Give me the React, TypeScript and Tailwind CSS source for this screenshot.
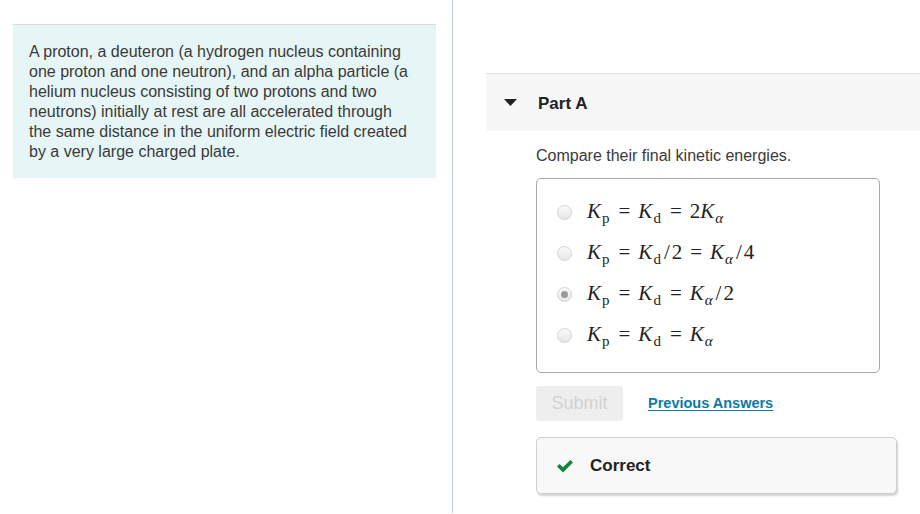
import React from "react";

type Opt = { parts: React.ReactNode; selected?: boolean };

function K({ sub }: { sub: React.ReactNode }) {
  return (
    <span className="whitespace-nowrap">
      <i>K</i>
      <span className="relative top-[5px] ml-[1px] mr-[1px] text-[15px] not-italic leading-none">{sub}</span>
    </span>
  );
}

const Eq = () => <span className="mx-[8px]">=</span>;
const Slash = () => <span className="mx-[2px]">/</span>;
const alpha = <i>α</i>;

const options: Opt[] = [
  {
    parts: (
      <>
        <K sub="p" />
        <Eq />
        <K sub="d" />
        <Eq />
        2<K sub={alpha} />
      </>
    ),
  },
  {
    parts: (
      <>
        <K sub="p" />
        <Eq />
        <K sub="d" />
        <Slash />2
        <Eq />
        <K sub={alpha} />
        <Slash />4
      </>
    ),
  },
  {
    parts: (
      <>
        <K sub="p" />
        <Eq />
        <K sub="d" />
        <Eq />
        <K sub={alpha} />
        <Slash />2
      </>
    ),
    selected: true,
  },
  {
    parts: (
      <>
        <K sub="p" />
        <Eq />
        <K sub="d" />
        <Eq />
        <K sub={alpha} />
      </>
    ),
  },
];

function Radio({ selected }: { selected?: boolean }) {
  return (
    <span className="w-[15px] h-[15px] rounded-full border border-[#d4d4d4] bg-gradient-to-b from-[#fafafa] to-[#e6e6e6] flex items-center justify-center shrink-0">
      {selected && <span className="w-[7px] h-[7px] rounded-full bg-[#9a9a9a]" />}
    </span>
  );
}

export default function App() {
  return (
    <div className="flex w-[920px] h-[514px] bg-white overflow-hidden font-['Liberation_Sans',Arial,sans-serif] text-[#333]">
      <div className="w-[453px] h-[513px] border-r border-[#b9cadb] shrink-0 pt-[24px] pl-[13px] pr-[16px]">
        <div className="bg-[#e6f5f6] border-t border-[#dcdcdc] pt-[17px] pb-[16px] px-[16px] text-[16px] leading-[20px] text-[#3a3a3a]">
          A proton, a deuteron (a hydrogen nucleus containing
          <br />
          one proton and one neutron), and an alpha particle (a
          <br />
          helium nucleus consisting of two protons and two
          <br />
          neutrons) initially at rest are all accelerated through
          <br />
          the same distance in the uniform electric field created
          <br />
          by a very large charged plate.
        </div>
      </div>

      <div className="flex-1 pt-[73px] pl-[33px]">
        <div className="h-[58px] bg-[#f7f7f7] border-t border-[#e2e2e2] flex items-center pl-[18px] gap-[21px]">
          <svg width="13" height="7" viewBox="0 0 13 7">
            <path d="M0 0h13L6.5 7z" fill="#222" />
          </svg>
          <span className="font-bold text-[17px] text-[#222] mt-[2px]">Part A</span>
        </div>

        <div className="pl-[50px] pr-[40px]">
          <p className="mt-[15px] text-[16px] leading-[20px] text-[#3a3a3a]">Compare their final kinetic energies.</p>

          <div className="mt-[12px] w-[344px] h-[195px] border border-[#a9a9a9] rounded-[5px] pt-[13px] pl-[20px] flex flex-col">
            {options.map((o, i) => (
              <div key={i} className="flex items-center h-[41px] gap-[15px]">
                <Radio selected={o.selected} />
                <span className="font-['Liberation_Serif','DejaVu_Serif',serif] text-[21px] leading-none text-[#222] whitespace-nowrap -mt-[3px]">
                  {o.parts}
                </span>
              </div>
            ))}
          </div>

          <div className="mt-[13px] flex items-center gap-[25px]">
            <button className="w-[87px] h-[35px] rounded-[3px] bg-[#eeeeee] text-[#d2d2d2] text-[18px]">Submit</button>
            <a href="#" className="font-bold text-[14.5px] text-[#0a7aa5] underline underline-offset-2">
              Previous Answers
            </a>
          </div>

          <div className="mt-[16px] w-[361px] h-[57px] rounded-[5px] border border-[#cfcfcf] bg-[#f8f8f8] shadow-[1px_2px_2px_rgba(0,0,0,0.18)] flex items-center pl-[19px] gap-[16px]">
            <svg width="18" height="14" viewBox="0 0 18 14">
              <path d="M1 7.5l2.6-2.6 3.4 3.4L14.4 1 17 3.6 7 13.4z" fill="#12843f" />
            </svg>
            <span className="font-bold text-[17px] text-[#222]">Correct</span>
          </div>
        </div>
      </div>
    </div>
  );
}
